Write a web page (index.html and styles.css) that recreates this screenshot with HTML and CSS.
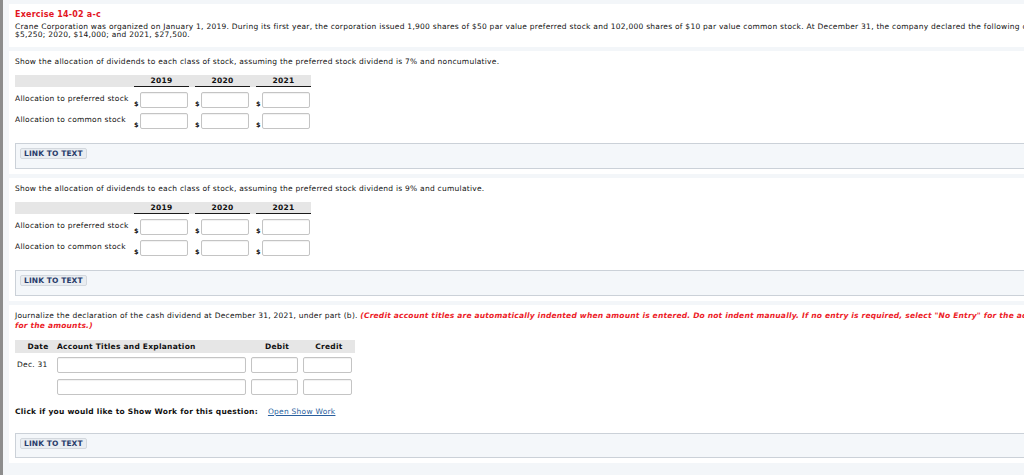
FILE: index.html
```html
<!DOCTYPE html>
<html>
<head>
<meta charset="utf-8">
<link rel="stylesheet" href="styles.css">
</head>
<body>
<div class="page">
  <section class="card intro">
    <h1 class="title">Exercise 14-02 a-c</h1>
    <p class="text tight">Crane Corporation was organized on January 1, 2019. During its first year, the corporation issued 1,900 shares of $50 par value preferred stock and 102,000 shares of $10 par value common stock. At December 31, the company declared the following cash dividends: 2019,<br>$5,250; 2020, $14,000; and 2021, $27,500.</p>
  </section>

  <section class="card part">
    <p class="text">Show the allocation of dividends to each class of stock, assuming the preferred stock dividend is 7% and noncumulative.</p>
    <div class="alloc">
      <div class="hcell"></div>
      <div class="hcell year">2019</div>
      <div class="hcell year">2020</div>
      <div class="hcell year last">2021</div>

      <div class="label">Allocation to preferred stock</div>
      <div class="money"><span class="cur">$</span><span class="box"></span></div>
      <div class="money"><span class="cur">$</span><span class="box"></span></div>
      <div class="money"><span class="cur">$</span><span class="box"></span></div>

      <div class="label">Allocation to common stock</div>
      <div class="money"><span class="cur">$</span><span class="box"></span></div>
      <div class="money"><span class="cur">$</span><span class="box"></span></div>
      <div class="money"><span class="cur">$</span><span class="box"></span></div>
    </div>
    <div class="linkbar"><span class="linkbtn">LINK TO TEXT</span></div>
  </section>

  <section class="card part">
    <p class="text">Show the allocation of dividends to each class of stock, assuming the preferred stock dividend is 9% and cumulative.</p>
    <div class="alloc">
      <div class="hcell"></div>
      <div class="hcell year">2019</div>
      <div class="hcell year">2020</div>
      <div class="hcell year last">2021</div>

      <div class="label">Allocation to preferred stock</div>
      <div class="money"><span class="cur">$</span><span class="box"></span></div>
      <div class="money"><span class="cur">$</span><span class="box"></span></div>
      <div class="money"><span class="cur">$</span><span class="box"></span></div>

      <div class="label">Allocation to common stock</div>
      <div class="money"><span class="cur">$</span><span class="box"></span></div>
      <div class="money"><span class="cur">$</span><span class="box"></span></div>
      <div class="money"><span class="cur">$</span><span class="box"></span></div>
    </div>
    <div class="linkbar"><span class="linkbtn">LINK TO TEXT</span></div>
  </section>

  <section class="card part journal-part">
    <p class="text loose">Journalize the declaration of the cash dividend at December 31, 2021, under part (b). <em class="warn">(Credit account titles are automatically indented when amount is entered. Do not indent manually. If no entry is required, select "No Entry" for the account titles and enter 0<br>for the amounts.)</em></p>
    <div class="journal">
      <div class="jh jdate">Date</div>
      <div class="jh jacct">Account Titles and Explanation</div>
      <div class="jh jnum">Debit</div>
      <div class="jh jnum jlast">Credit</div>

      <div class="jdatecell">Dec. 31</div>
      <span class="box"></span>
      <span class="box"></span>
      <span class="box"></span>

      <div class="jdatecell"></div>
      <span class="box"></span>
      <span class="box"></span>
      <span class="box"></span>
    </div>
    <p class="showwork"><strong>Click if you would like to Show Work for this question:</strong><a class="openlink" href="#">Open Show Work</a></p>
    <div class="linkbar short"><span class="linkbtn">LINK TO TEXT</span></div>
  </section>
</div>
</body>
</html>
```

FILE: styles.css
```css
html, body {
  margin: 0;
  padding: 0;
  overflow: hidden;
}
body {
  background: #f3f6f9;
  border-left: 3px solid #8d8d8d;
  font-family: "DejaVu Sans", Verdana, sans-serif;
  font-size: 7.5px;
  letter-spacing: 0.25px;
  line-height: 9px;
  color: #111;
  height: 475px;
  box-sizing: border-box;
}
.page {
  width: 1160px;
  padding: 4px 0 0 6px;
}
.card {
  background: #fff;
  margin-bottom: 4px;
  padding: 6px 0 5px 6px;
}
.intro {
  padding: 5px 0 8px 6px;
}
.title {
  margin: 0 0 2px 0;
  font-size: 8px;
  letter-spacing: 0.2px;
  line-height: 12px;
  font-weight: bold;
  color: #e3161f;
}
.text {
  margin: 0;
  white-space: nowrap;
}
.text.tight {
  line-height: 8px;
}
.text.loose {
  line-height: 9.5px;
}
.warn {
  color: #ec1c28;
  font-weight: bold;
  letter-spacing: 0.2px;
}

/* allocation table */
.alloc {
  display: grid;
  grid-template-columns: 113px 55px 55px 55px;
  column-gap: 6px;
  margin-top: 9px;
  width: 297px;
}
.hcell {
  background: #e6e6e6;
  height: 12px;
  box-sizing: border-box;
  margin-right: -6px;
}
.hcell.year {
  font-weight: bold;
  text-align: center;
  line-height: 11px;
  border-bottom: 1px solid #1a1a1a;
  margin-right: 0;
  position: relative;
}
.hcell.year:not(.last)::after {
  content: "";
  position: absolute;
  top: 0;
  right: -6px;
  width: 6px;
  height: 12px;
  background: #e6e6e6;
}
.label {
  align-self: center;
  white-space: nowrap;
  padding-top: 1px;
}
.money {
  display: flex;
  align-items: flex-end;
  margin-top: 5px;
}
.cur {
  width: 6px;
  font-size: 6.5px;
  line-height: 6px;
  font-weight: bold;
  letter-spacing: 0;
  padding-bottom: 1px;
}
.box {
  display: block;
  width: 48px;
  height: 16px;
  box-sizing: border-box;
  border: 1px solid #c4c4c4;
  border-radius: 2px;
  background: #fff;
  box-shadow: inset 0 1px 1px rgba(0,0,0,0.06);
}

/* link bar */
.linkbar {
  margin-top: 14px;
  background: #f4f7fa;
  border: 1px solid #cbd1d8;
  border-right: none;
  height: 26px;
  box-sizing: border-box;
  padding: 4px 0 0 4px;
}
.linkbar.short {
  margin-top: 16px;
  height: 25px;
}
.linkbtn {
  display: inline-block;
  background: #e9edf1;
  border: 1px solid #d3d8de;
  border-radius: 2px;
  color: #283c6b;
  font-weight: bold;
  font-size: 7.5px;
  letter-spacing: 0.1px;
  line-height: 9px;
  padding: 0 3px;
}

/* journal */
.journal {
  display: grid;
  grid-template-columns: 37px 189px 47px 49px;
  column-gap: 5px;
  row-gap: 6px;
  margin-top: 10px;
  width: 337px;
}
.jh {
  background: #e6e6e6;
  height: 13px;
  line-height: 13px;
  font-weight: bold;
  margin-bottom: -2px;
  margin-right: -5px;
}
.jh.jlast {
  margin-right: -3px;
}
.jdate {
  text-align: center;
  padding-left: 4px;
}
.jnum {
  text-align: center;
}
.jdatecell {
  padding: 3px 0 0 2px;
}
.journal .box {
  width: auto;
}
.showwork {
  margin: 12px 0 0 0;
}
.openlink {
  margin-left: 10px;
  color: #2a5f9e;
  text-decoration: underline;
}
.linkbar.short {
  margin-top: 17px;
}
```
